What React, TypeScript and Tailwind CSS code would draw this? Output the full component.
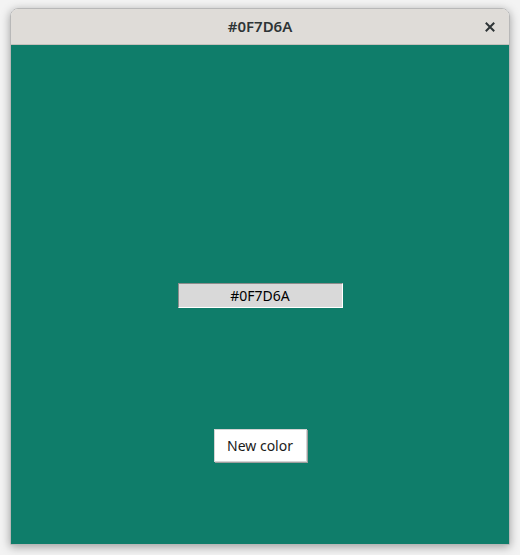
export default function App() {
  const hex = "#0F7D6A";
  return (
    <div className="w-[520px] h-[555px] bg-[#f3f3f3] pt-[8px] px-[10px] overflow-hidden">
      <div className="w-[500px] h-[537px] flex flex-col rounded-t-[8px] border border-[#b8b8b8] shadow-[0_2px_10px_rgba(0,0,0,0.35)] overflow-hidden">
        <div className="h-[36px] shrink-0 bg-[#dfdcd8] border-b border-[#c4c0bb] flex items-center justify-center relative">
          <span className="font-['Noto_Sans',sans-serif] font-semibold text-[15px] text-[#2e3436]">{hex}</span>
          <svg width="10" height="10" viewBox="0 0 10 10" className="absolute right-[14px] top-[13px]">
            <path d="M1.5 1.5 L8.5 8.5 M8.5 1.5 L1.5 8.5" stroke="#2e3436" strokeWidth="2" strokeLinecap="square" />
          </svg>
        </div>
        <div className="flex-1 bg-[#0F7D6A] flex flex-col items-center pt-[238px]">
          <div className="w-[165px] h-[25px] bg-[#d9d9d9] border border-t-[#8c8c8c] border-l-[#8c8c8c] border-b-white border-r-white flex items-center justify-center font-['Noto_Sans',sans-serif] text-[14px] text-black">
            {hex}
          </div>
          <button className="mt-[121px] w-[93px] h-[33px] bg-white border border-[#d4d4d4] shadow-[1px_1px_0_#9e9e9e] font-['Noto_Sans',sans-serif] text-[14px] text-[#1a1a1a]">
            New color
          </button>
        </div>
      </div>
    </div>
  );
}
